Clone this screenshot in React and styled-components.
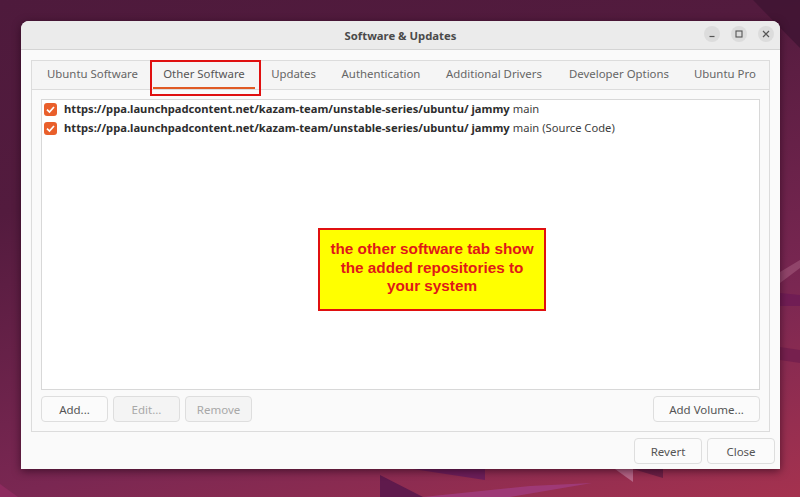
import React from 'react';
import styled, { createGlobalStyle } from 'styled-components';

const GlobalStyle = createGlobalStyle`
  html, body {
    margin: 0;
    padding: 0;
    background: #5a1c42;
  }
  * {
    box-sizing: border-box;
  }
`;

const Desktop = styled.div`
  position: relative;
  width: 800px;
  height: 497px;
  overflow: hidden;
  padding: 21px 20px 28px 21px;
  font-family: "Noto Sans", "Open Sans", sans-serif;
  background: linear-gradient(165deg, #4e1a3c 0%, #531b3e 30%, #7a2752 70%, #a5324f 100%);
`;

const Wallpaper = styled.svg`
  position: absolute;
  inset: 0;
`;

const Window = styled.div`
  position: relative;
  height: 100%;
  display: flex;
  flex-direction: column;
  background: #fafafa;
  border-radius: 8px 8px 0 0;
  box-shadow: 0 2px 9px rgba(30, 0, 20, 0.6);
`;

const TitleBar = styled.div`
  position: relative;
  flex: none;
  height: 29px;
  display: flex;
  align-items: center;
  justify-content: center;
  background: #ebebeb;
  border-bottom: 1px solid #d4d4d4;
  border-radius: 8px 8px 0 0;
`;

const Title = styled.div`
  font-size: 11.3px;
  font-weight: 700;
  color: #4a4a4a;
`;

const WindowControls = styled.div`
  position: absolute;
  top: 5px;
  right: 6px;
  display: flex;
  gap: 11px;
`;

const ControlButton = styled.div`
  width: 16px;
  height: 16px;
  border-radius: 50%;
  background: #dcdcdc;
  display: flex;
  align-items: center;
  justify-content: center;
`;

const Body = styled.div`
  flex: 1;
  min-height: 0;
  display: flex;
  flex-direction: column;
  padding: 10px 10px 5px;
`;

const Notebook = styled.div`
  flex: 1;
  min-height: 0;
  display: flex;
  flex-direction: column;
  border: 1px solid #dcdcdc;
`;

const TabBar = styled.div`
  flex: none;
  height: 29px;
  display: flex;
  background: #f5f5f5;
  border-bottom: 1px solid #dcdcdc;
`;

const Tab = styled.div`
  position: relative;
  width: ${(p) => p.$width}px;
  margin-left: ${(p) => p.$gap}px;
  padding-top: 5px;
  font-size: 11.4px;
  line-height: 16px;
  text-align: center;
  white-space: nowrap;
  color: #666;

  ${(p) =>
    p.$active &&
    `
    color: #555;
    &::after {
      content: '';
      position: absolute;
      left: -10px;
      right: -10px;
      bottom: 0;
      height: 2px;
      background: #e05a24;
    }
  `}
`;

const TabPage = styled.div`
  flex: 1;
  min-height: 0;
  display: flex;
  flex-direction: column;
  padding: 9px;
`;

const SourceList = styled.div`
  flex: 1;
  min-height: 0;
  padding: 0 2px;
  background: #fff;
  border: 1px solid #d8d8d8;
`;

const SourceRow = styled.div`
  height: 19px;
  display: flex;
  align-items: center;
  gap: 7px;
  font-size: 11.2px;
  color: #3d3d3d;
  white-space: nowrap;
`;

const SourceText = styled.span`
  margin-bottom: 2px;
`;

const CheckBox = styled.div`
  flex: none;
  width: 13px;
  height: 13px;
  border-radius: 3px;
  background: #e95f2b;
  display: flex;
  align-items: center;
  justify-content: center;
`;

const Url = styled.b`
  font-weight: 700;
  color: #2e2e2e;
  margin-right: 3px;
`;

const ButtonRow = styled.div`
  flex: none;
  display: flex;
  gap: 5px;
  margin-top: 6px;
`;

const Button = styled.div`
  height: 26px;
  width: ${(p) => p.$width}px;
  ${(p) => p.$push && 'margin-left: auto;'}
  display: flex;
  align-items: center;
  justify-content: center;
  font-size: 11.5px;
  color: ${(p) => (p.$disabled ? '#a8a8a8' : '#555')};
  background: ${(p) => (p.$disabled ? '#f4f4f4' : '#fbfbfb')};
  border: 1px solid #dedede;
  border-radius: 4px;
`;

const DialogActions = styled.div`
  flex: none;
  display: flex;
  justify-content: flex-end;
  gap: 5px;
  margin: 6px -5px 0 0;
`;

const TabHighlight = styled.div`
  position: absolute;
  left: 150px;
  top: 60px;
  width: 111px;
  height: 36px;
  border: 2px solid #e01010;
`;

const Callout = styled.div`
  position: absolute;
  left: 318px;
  top: 228px;
  width: 228px;
  height: 83px;
  padding-top: 10px;
  background: #ffff00;
  border: 2px solid #e01010;
  color: #e01818;
  font-family: "Liberation Sans", Arial, sans-serif;
  font-size: 15.3px;
  line-height: 18.5px;
  font-weight: 700;
  text-align: center;
`;

const tabs = [
  { label: 'Ubuntu Software', gap: 15, width: 90 },
  { label: 'Other Software', gap: 26, width: 82, active: true },
  { label: 'Updates', gap: 26, width: 45 },
  { label: 'Authentication', gap: 25, width: 80 },
  { label: 'Additional Drivers', gap: 25, width: 96 },
  { label: 'Developer Options', gap: 26, width: 102 },
  { label: 'Ubuntu Pro', gap: 24, width: 60 },
];

const sources = [
  { id: 1, suffix: 'main' },
  { id: 2, suffix: 'main (Source Code)' },
];

const Check = () => (
  <svg width="11" height="11" viewBox="0 0 11 11">
    <path d="M2 5.6 L4.5 8 L9 3" fill="none" stroke="#fff" strokeWidth="1.7" />
  </svg>
);

const App = () => {
  return (
    <>
      <GlobalStyle />
      <Desktop>
        <Wallpaper width="800" height="497" viewBox="0 0 800 497">
          <polygon points="753,0 800,0 800,48" fill="#3f1432" opacity="0.8" />
          <polygon points="0,484 0,497 18,497" fill="#8d2a5e" />
          <polygon points="380,475 423,497 380,497" fill="#5f1a4c" />
          <polygon points="413,469 485,469 485,480" fill="#571560" opacity="0.6" />
          <polygon points="423,497 530,486 592,483 510,497" fill="#a23d83" opacity="0.75" />
          <polygon points="615,469 633,469 633,482" fill="#c07a9a" opacity="0.75" />
          <polygon points="633,469 663,469 663,478" fill="#5a1a42" opacity="0.7" />
          <polygon points="780,272 800,260 800,268 780,283" fill="#b06a8a" opacity="0.45" />
          <polygon points="780,293 800,295 800,306 780,306" fill="#6d1a55" opacity="0.8" />
          <polygon points="780,347 800,350 800,363 780,360" fill="#721e4e" opacity="0.8" />
        </Wallpaper>
        <Window>
          <TitleBar>
            <Title>Software &amp; Updates</Title>
            <WindowControls>
              <ControlButton>
                <svg width="10" height="10" viewBox="0 0 10 10">
                  <path d="M2.5 7.5 H7.5" stroke="#555" strokeWidth="1.2" />
                </svg>
              </ControlButton>
              <ControlButton>
                <svg width="10" height="10" viewBox="0 0 10 10">
                  <rect x="2" y="2" width="6" height="6" fill="none" stroke="#555" strokeWidth="1.1" />
                </svg>
              </ControlButton>
              <ControlButton>
                <svg width="10" height="10" viewBox="0 0 10 10">
                  <path d="M2 2 L8 8 M8 2 L2 8" stroke="#555" strokeWidth="1.2" />
                </svg>
              </ControlButton>
            </WindowControls>
          </TitleBar>
          <Body>
            <Notebook>
              <TabBar>
                {tabs.map((tab) => (
                  <Tab key={tab.label} $gap={tab.gap} $width={tab.width} $active={tab.active}>
                    {tab.label}
                  </Tab>
                ))}
              </TabBar>
              <TabPage>
                <SourceList>
                  {sources.map((source) => (
                    <SourceRow key={source.id}>
                      <CheckBox>
                        <Check />
                      </CheckBox>
                      <SourceText>
                        <Url>https://ppa.launchpadcontent.net/kazam-team/unstable-series/ubuntu/ jammy</Url>
                        {source.suffix}
                      </SourceText>
                    </SourceRow>
                  ))}
                </SourceList>
                <ButtonRow>
                  <Button $width={67}>Add...</Button>
                  <Button $width={67} $disabled>Edit...</Button>
                  <Button $width={67} $disabled>Remove</Button>
                  <Button $width={107} $push>Add Volume...</Button>
                </ButtonRow>
              </TabPage>
            </Notebook>
            <DialogActions>
              <Button $width={68}>Revert</Button>
              <Button $width={68}>Close</Button>
            </DialogActions>
          </Body>
        </Window>
        <TabHighlight />
        <Callout>
          the other software tab show
          <br />
          the added repositories to
          <br />
          your system
        </Callout>
      </Desktop>
    </>
  );
};

export default App;
